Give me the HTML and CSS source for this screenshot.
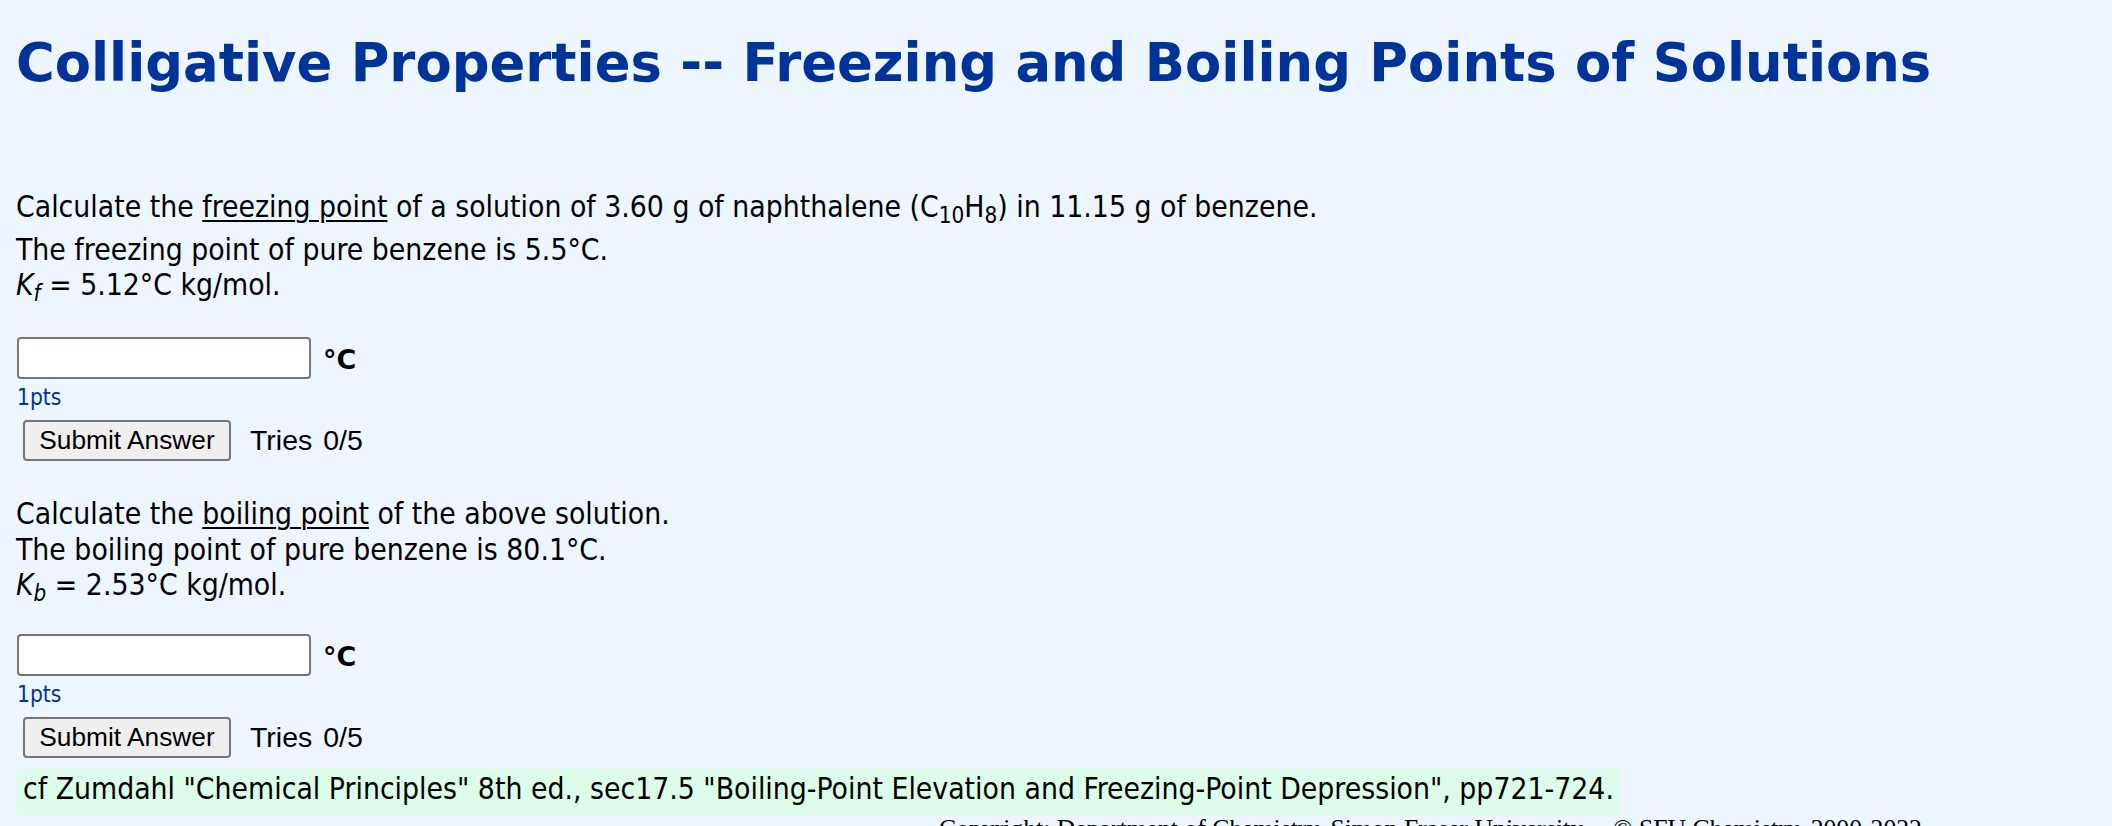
FILE: index.html
```html
<!DOCTYPE html>
<html>
<head>
<meta charset="utf-8">
<title>Colligative Properties</title>
<link rel="stylesheet" href="styles.css">
</head>
<body>
<h1 class="title">Colligative Properties -- Freezing and Boiling Points of Solutions</h1>

<section class="question q1">
  <div class="line first">Calculate the <u>freezing point</u> of a solution of 3.60 g of naphthalene (C<sub>10</sub>H<sub>8</sub>) in 11.15 g of benzene.</div>
  <div class="line">The freezing point of pure benzene is 5.5°C.</div>
  <div class="line"><i>K<sub>f</sub></i> = 5.12°C kg/mol.</div>
  <div class="answer">
    <input class="field" type="text">
    <span class="unit">°C</span>
  </div>
  <div class="pts">1pts</div>
  <div class="submit">
    <button class="btn">Submit Answer</button>
    <span class="tries">Tries 0/5</span>
  </div>
</section>

<section class="question q2">
  <div class="line second">Calculate the <u>boiling point</u> of the above solution.</div>
  <div class="line">The boiling point of pure benzene is 80.1°C.</div>
  <div class="line"><i>K<sub>b</sub></i> = 2.53°C kg/mol.</div>
  <div class="answer">
    <input class="field" type="text">
    <span class="unit">°C</span>
  </div>
  <div class="pts">1pts</div>
  <div class="submit">
    <button class="btn">Submit Answer</button>
    <span class="tries">Tries 0/5</span>
  </div>
</section>

<div class="ref">cf Zumdahl "Chemical Principles" 8th ed., sec17.5 "Boiling-Point Elevation and Freezing-Point Depression", pp721-724.</div>

<div class="copyright">Copyright: Department of Chemistry, Simon Fraser University -- © SFU Chemistry, 2000-2022</div>
</body>
</html>
```

FILE: styles.css
```css
html, body {
  margin: 0;
  padding: 0;
}
body {
  background: #edf5ff;
  padding: 0 16px;
  font-family: "DejaVu Sans Condensed", "DejaVu Sans", sans-serif;
  font-size: 29.8px;
  color: #000;
  overflow: hidden;
  height: 826px;
}
.title {
  margin: 0;
  padding-top: 31px;
  font-family: "DejaVu Sans", sans-serif;
  font-size: 52.8px;
  line-height: 64px;
  font-weight: bold;
  color: #003399;
  white-space: nowrap;
}
.q1 {
  margin-top: 92px;
}
.line {
  line-height: 35px;
  height: 35px;
  white-space: nowrap;
}
.line.first {
  height: 45px;
  line-height: 40px;
}
.line.second {
  height: 37px;
  line-height: 37px;
}
sub {
  font-size: 0.75em;
  line-height: 0;
  vertical-align: -0.25em;
}
u {
  text-decoration-thickness: 2px;
  text-underline-offset: 3px;
}
.answer {
  display: flex;
  align-items: center;
  margin-top: 35px;
  height: 42px;
}
.q2 .answer {
  margin-top: 32px;
}
.field {
  box-sizing: border-box;
  width: 294px;
  height: 42px;
  margin: 0 0 0 1px;
  border: 2px solid #767676;
  border-radius: 4px;
  background: #fff;
  padding: 0 4px;
}
.unit {
  font-family: "DejaVu Sans", sans-serif;
  font-weight: bold;
  font-size: 27px;
  margin-left: 12px;
  position: relative;
  top: 1px;
}
.pts {
  font-size: 22.5px;
  line-height: 26px;
  height: 26px;
  margin-top: 5px;
  color: #003399;
  padding-left: 1px;
}
.submit {
  display: flex;
  align-items: center;
  margin-top: 10px;
  height: 41px;
}
.btn {
  box-sizing: border-box;
  height: 41px;
  width: 208px;
  margin-left: 7px;
  padding: 0;
  font-family: "Liberation Sans", Arial, sans-serif;
  font-size: 26.3px;
  color: #000;
  background: #efefef;
  border: 2px solid #767676;
  border-radius: 4px;
}
.tries {
  font-family: "Liberation Sans", Arial, sans-serif;
  font-size: 28.5px;
  margin-left: 19px;
  word-spacing: 3px;
}
.q2 {
  margin-top: 34px;
}
.ref {
  display: inline-block;
  margin-top: 11px;
  margin-left: 1px;
  height: 46px;
  line-height: 40px;
  padding: 0 6px;
  background: #dcfde9;
  white-space: nowrap;
}
.copyright {
  margin-top: -1px;
  padding-left: 923px;
  font-family: "Liberation Serif", "Times New Roman", serif;
  font-size: 25.7px;
  line-height: 30px;
  white-space: nowrap;
}
```
